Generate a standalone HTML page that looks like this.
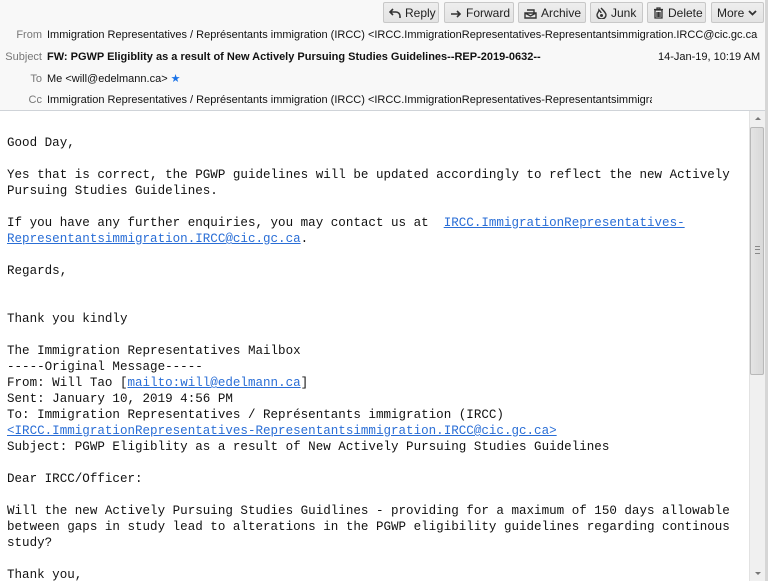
<!DOCTYPE html>
<html><head><meta charset="utf-8"><style>
body{margin:0;width:768px;height:581px;overflow:hidden;background:#fff;position:relative;font-family:"Liberation Sans",sans-serif;}
#hdr{position:absolute;left:0;top:0;width:768px;height:110px;background:#f8f8f8;border-bottom:1px solid #cfd3d8;}
.btn{position:absolute;top:2px;height:21px;background:linear-gradient(#eeeeee,#e3e3e3);border:1px solid #c8c8c8;border-radius:2px;font-size:12px;color:#222;line-height:21px;box-sizing:border-box;padding-left:5px;white-space:nowrap}
.btn svg{vertical-align:-2px;margin-right:4px}
.row{position:absolute;font-size:11px;line-height:14px;color:#111;white-space:nowrap;}
.lbl{position:absolute;font-size:11px;line-height:14px;color:#777;text-align:right;width:42px;}
#body{position:absolute;left:7px;top:135px;font-family:"Liberation Mono",monospace;font-size:12.55px;line-height:16px;color:#111;white-space:pre;}
a{color:#2a6ed6;text-decoration:underline}
#sb{position:absolute;left:749px;top:111px;width:16px;height:470px;background:#f0f0f0;border-left:1px solid #e2e2e2}
#thumb{position:absolute;left:750px;top:127px;width:14px;height:248px;background:linear-gradient(90deg,#e4e4e4,#d8d8d8);border:1px solid #b8b8b8;border-radius:2px;box-sizing:border-box}
#edge{position:absolute;left:765px;top:0;width:3px;height:581px;background:#d6d6d6}
</style></head><body>
<div id="hdr">
<div class="btn" style="left:383px;width:56px"><svg width="12" height="11"><path d="M4 1L1 4l3 3M1 4h6a4 4 0 0 1 4 4v2" fill="none" stroke="#333" stroke-width="1.6"/></svg>Reply</div>
<div class="btn" style="left:444px;width:70px"><svg width="12" height="11"><path d="M1 6h9M7 3l3 3-3 3" fill="none" stroke="#333" stroke-width="1.6"/></svg>Forward</div>
<div class="btn" style="left:518px;width:68px"><svg width="13" height="11"><path d="M1 5h11v5H1zM3 2h7v3M1 5l5.5 3L12 5" fill="none" stroke="#333" stroke-width="1.4"/></svg>Archive</div>
<div class="btn" style="left:590px;width:53px"><svg width="11" height="12"><path d="M5 1c3 3 5 5 5 7a4.5 4 0 0 1-9 0c0-2 2-3 2-5 1 1 2 2 2 3" fill="none" stroke="#333" stroke-width="1.4"/><circle cx="5.5" cy="8.5" r="1.5" fill="#333"/></svg>Junk</div>
<div class="btn" style="left:647px;width:59px"><svg width="11" height="12"><path d="M1 2.5h9M4 2.5V1h3v1.5M2 3h7v8H2zM4 5v5M5.5 5v5M7 5v5" fill="none" stroke="#333" stroke-width="1.3"/></svg>Delete</div>
<div class="btn" style="left:711px;width:53px">More <svg width="9" height="6" style="margin:0;vertical-align:1px"><path d="M1 1l3.5 3.5L8 1" fill="none" stroke="#333" stroke-width="1.8"/></svg></div>
<div class="lbl" style="left:0;top:28px">From</div><div class="row" style="left:47px;top:28px;width:718px;overflow:hidden">Immigration Representatives / Représentants immigration (IRCC) &lt;IRCC.ImmigrationRepresentatives-Representantsimmigration.IRCC@cic.gc.ca</div>
<div class="lbl" style="left:0;top:50px">Subject</div><div class="row" style="left:47px;top:50px;font-weight:bold">FW: PGWP Eligiblity as a result of New Actively Pursuing Studies Guidelines--REP-2019-0632--</div>
<div class="row" style="left:658px;top:50px">14-Jan-19, 10:19 AM</div>
<div class="lbl" style="left:0;top:72px">To</div><div class="row" style="left:47px;top:72px">Me &lt;will@edelmann.ca&gt; <span style="color:#1a73e8">★</span></div>
<div class="lbl" style="left:0;top:93px">Cc</div><div class="row" style="left:47px;top:93px;width:605px;overflow:hidden">Immigration Representatives / Représentants immigration (IRCC) &lt;IRCC.ImmigrationRepresentatives-Representantsimmigration</div>
</div>
<div id="body">Good Day,

Yes that is correct, the PGWP guidelines will be updated accordingly to reflect the new Actively
Pursuing Studies Guidelines.

If you have any further enquiries, you may contact us at  <a>IRCC.ImmigrationRepresentatives-</a>
<a>Representantsimmigration.IRCC@cic.gc.ca</a>.

Regards,


Thank you kindly

The Immigration Representatives Mailbox
-----Original Message-----
From: Will Tao [<a>mailto:will@edelmann.ca</a>]
Sent: January 10, 2019 4:56 PM
To: Immigration Representatives / Représentants immigration (IRCC)
<a>&lt;IRCC.ImmigrationRepresentatives-Representantsimmigration.IRCC@cic.gc.ca&gt;</a>
Subject: PGWP Eligiblity as a result of New Actively Pursuing Studies Guidelines

Dear IRCC/Officer:

Will the new Actively Pursuing Studies Guidlines - providing for a maximum of 150 days allowable
between gaps in study lead to alterations in the PGWP eligibility guidelines regarding continous
study?

Thank you,</div>
<div id="sb"><div style="position:absolute;left:5px;top:6px;border:3px solid transparent;border-bottom:3px solid #777;border-top:0"></div><div style="position:absolute;left:5px;bottom:6px;border:3px solid transparent;border-top:3px solid #777;border-bottom:0"></div></div>
<div id="thumb"><div style="position:absolute;left:4px;top:118px;width:5px;height:6px;border-top:1px solid #888;border-bottom:1px solid #888"><div style="margin-top:2px;border-top:1px solid #888"></div></div></div>
<div id="edge"></div>
</body></html>
